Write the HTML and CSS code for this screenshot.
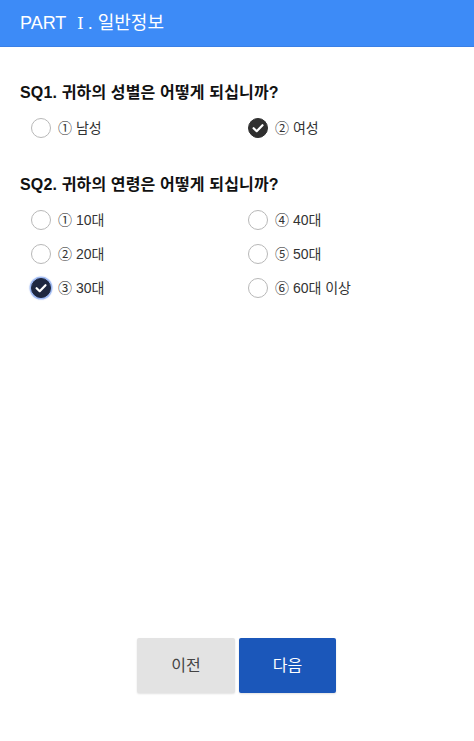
FILE: index.html
```html
<!DOCTYPE html>
<html lang="ko">
<head>
<meta charset="utf-8">
<title>PART Ⅰ. 일반정보</title>
<link rel="stylesheet" href="styles.css">
</head>
<body>
<div class="page">
  <header class="topbar">PART <span class="roman">Ⅰ</span>. 일반정보</header>
  <main class="content">
    <section class="question">
      <h2 class="q-title">SQ1. 귀하의 성별은 어떻게 되십니까?</h2>
      <div class="options">
        <div class="option"><span class="radio"></span><span class="label">① 남성</span></div>
        <div class="option"><span class="radio checked"><svg viewBox="0 0 20 20" width="20" height="20"><path d="M5.6 10.2 L8.7 13.2 L14.5 7.2" fill="none" stroke="#fff" stroke-width="2.2" stroke-linecap="round" stroke-linejoin="round"/></svg></span><span class="label">② 여성</span></div>
      </div>
    </section>
    <section class="question">
      <h2 class="q-title">SQ2. 귀하의 연령은 어떻게 되십니까?</h2>
      <div class="options">
        <div class="option"><span class="radio"></span><span class="label">① 10대</span></div>
        <div class="option"><span class="radio"></span><span class="label">④ 40대</span></div>
        <div class="option"><span class="radio"></span><span class="label">② 20대</span></div>
        <div class="option"><span class="radio"></span><span class="label">⑤ 50대</span></div>
        <div class="option"><span class="radio checked focused"><svg viewBox="0 0 20 20" width="20" height="20"><path d="M5.6 10.2 L8.7 13.2 L14.5 7.2" fill="none" stroke="#fff" stroke-width="2.2" stroke-linecap="round" stroke-linejoin="round"/></svg></span><span class="label">③ 30대</span></div>
        <div class="option"><span class="radio"></span><span class="label">⑥ 60대 이상</span></div>
      </div>
    </section>
  </main>
  <footer class="actions">
    <button class="btn btn-prev" type="button">이전</button>
    <button class="btn btn-next" type="button">다음</button>
  </footer>
</div>
</body>
</html>
```

FILE: styles.css
```css
* { box-sizing: border-box; }
html, body { margin: 0; padding: 0; background: #fff; }
body {
  font-family: "Liberation Sans", "Noto Sans CJK KR", sans-serif;
  color: #222;
}
.page {
  min-height: 741px;
  display: flex;
  flex-direction: column;
}
.topbar {
  height: 47px;
  line-height: 46px;
  background: #3d8bf7;
  border-bottom: 1px solid #3a80e6;
  color: #fff;
  font-size: 18px;
  padding-left: 20px;
}
.roman {
  font-family: "DejaVu Serif", "Noto Sans CJK KR", serif;
  font-size: 17px;
  padding: 0 4px 0 6px;
}
.content {
  padding: 0 20px;
}
.question { margin-top: 36px; }
.question + .question { margin-top: 30px; }
.q-title {
  margin: 0;
  font-size: 16px;
  line-height: 20px;
  font-weight: bold;
  letter-spacing: 0.15px;
  color: #111;
}
.options {
  margin-top: 8px;
  padding-left: 11px;
  display: grid;
  grid-template-columns: 217px 1fr;
  grid-auto-rows: 34px;
}
.option {
  display: flex;
  align-items: center;
  gap: 7px;
}
.radio {
  width: 20px;
  height: 20px;
  border-radius: 50%;
  border: 1.5px solid #b8b8b8;
  background: #fff;
  flex: none;
  display: flex;
  align-items: center;
  justify-content: center;
}
.radio.checked {
  background: #2f2f2f;
  border-color: #2f2f2f;
}
.radio.checked svg { display: block; margin: -1.5px; }
.radio.focused {
  background: #1e2740;
  border-color: #1e2740;
  box-shadow: 0 0 1px 1.5px rgba(70, 120, 230, 0.55);
}
.label {
  font-size: 14px;
  color: #333;
  line-height: 20px;
}
.actions {
  margin-top: auto;
  padding: 0 1px 48px 0;
  display: flex;
  justify-content: center;
  gap: 4px;
}
.btn {
  height: 55px;
  border: none;
  border-radius: 2px;
  padding: 0 0 4px;
  font-family: "Liberation Sans", "Noto Sans CJK KR", sans-serif;
  font-size: 16px;
  cursor: pointer;
  box-shadow: 0 1px 2px rgba(0, 0, 0, 0.12);
}
.btn-prev {
  width: 98px;
  background: #e3e3e3;
  color: #444;
}
.btn-next {
  width: 97px;
  background: #1b57ba;
  color: #fff;
}
```
